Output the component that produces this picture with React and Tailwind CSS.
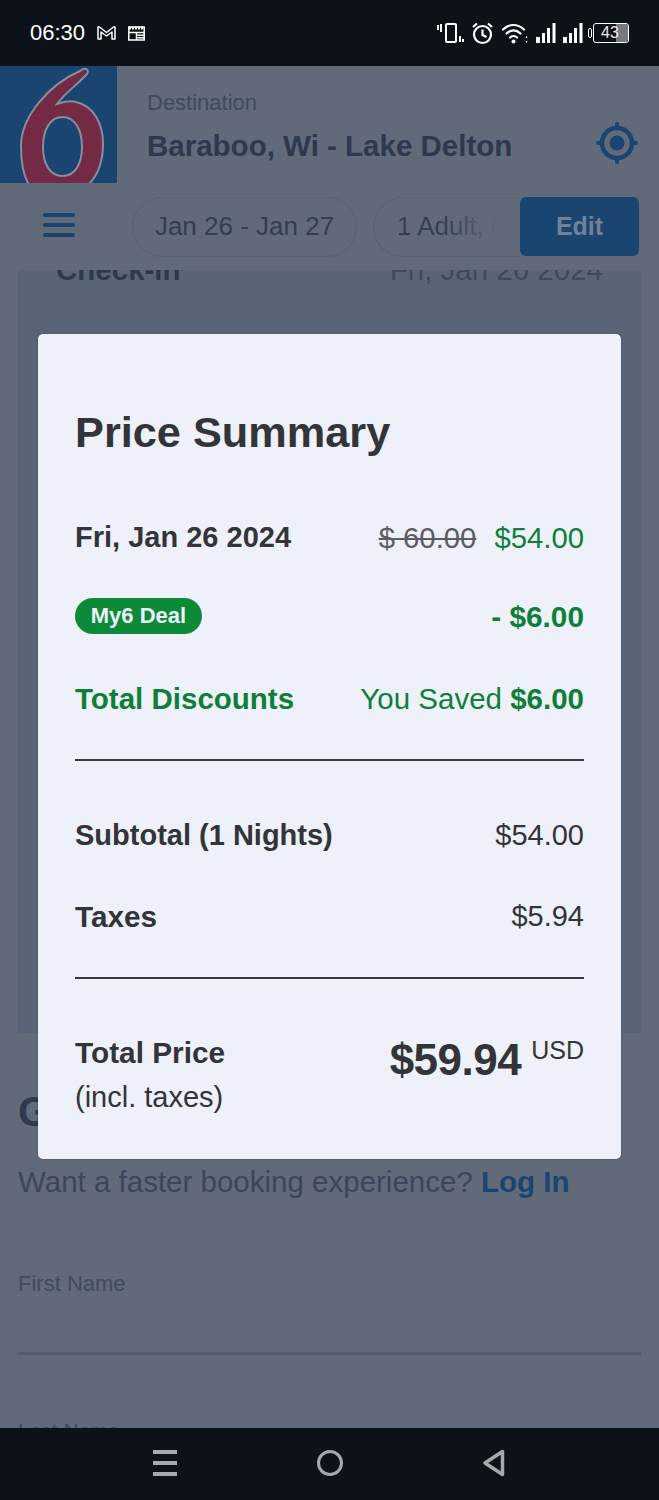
import React from "react";

function SignalBars({ className = "" }) {
  return (
    <svg className={className} width="20" height="20" viewBox="0 0 20 20" fill="white">
      <rect x="0" y="14" width="4" height="6" />
      <rect x="6" y="10" width="3" height="10" />
      <rect x="11" y="5" width="3" height="15" />
      <rect x="16.500" y="0" width="3" height="20" />
    </svg>
  );
}

function StatusIcons() {
  return (
    <div className="flex items-center text-white">
      <svg width="27" height="20" viewBox="0 0 27 20" fill="none" stroke="white">
        <path d="M1 2v5M4 1v8" strokeWidth="2" />
        <rect x="9" y="1" width="10" height="18" rx="1" strokeWidth="2" />
        <path d="M23 13v6M26 16v3" strokeWidth="2" />
      </svg>
      <svg className="ml-[7px]" width="23" height="23" viewBox="0 0 23 23" fill="none" stroke="white" strokeWidth="2.200">
        <circle cx="11.500" cy="12.500" r="8.500" />
        <path d="M11.500 7.500v5.500l4 2M2 5l4-3.500M21 5l-4-3.500" />
      </svg>
      <svg className="ml-[7px]" width="27" height="21" viewBox="0 0 27 21" fill="none" stroke="white" strokeWidth="2.200" strokeLinecap="round">
        <path d="M2 6.500c6.500-6 14.500-6 21 0M5.500 10.500c4.500-4 9.500-4 14 0M9 14.500c2-2 5-2 7 0" />
        <circle cx="12.500" cy="18.500" r="2" fill="white" stroke="none" />
        <path d="M25.500 14v.5M25.500 18.500v.5" strokeWidth="1.500" />
      </svg>
      <SignalBars className="ml-[8px]" />
      <SignalBars className="ml-[7px]" />
      <svg className="ml-[5px]" width="4" height="10" viewBox="0 0 4 10"><rect x="0.500" y="0.500" width="3" height="9" rx="1.500" fill="none" stroke="white" strokeWidth="1" /></svg>
      <div className="relative ml-[1px] flex h-[20px] w-[36px] items-center justify-center overflow-hidden rounded-[3px] border border-white text-[16px] leading-none text-[#e8e8e8]">
        <div className="absolute inset-y-0 right-0 w-[36%] bg-[#77797c]" />
        <span className="relative -ml-[2px]">43</span>
      </div>
    </div>
  );
}

function Row({ className = "", children }) {
  return <div className={`flex items-center justify-between ${className}`}>{children}</div>;
}

export default function App() {
  return (
    <div className="relative flex h-[1500px] w-[659px] flex-col overflow-hidden bg-[#606a79] font-['Liberation_Sans',Arial,sans-serif]">
      {/* status bar */}
      <div className="flex h-[66px] shrink-0 items-center justify-between bg-[#0c1218] pl-[30px] pr-[30px]">
        <div className="flex items-center gap-[12px] text-white">
          <span className="text-[22px] leading-none">06:30</span>
          <svg width="19" height="14" viewBox="0 0 19 14" fill="none" stroke="white" strokeWidth="1.500">
            <path d="M1 13V1h1.500L9.500 6.500 16.500 1H18v12h-3V6L9.500 10 4 6v7z" strokeLinejoin="round" />
          </svg>
          <svg width="17" height="15" viewBox="0 0 17 15" fill="none" stroke="white" strokeWidth="1.500">
            <rect x="0.800" y="1" width="15.400" height="13" />
            <path d="M1 2h15" strokeWidth="3" strokeDasharray="2 1" />
            <path d="M1 6.500h15M8.500 6.500v7.500M9.500 9.200h7M9.500 11.700h7" />
          </svg>
        </div>
        <StatusIcons />
      </div>

      {/* header */}
      <div className="flex h-[117px] shrink-0">
        <div className="h-[117px] w-[117px] shrink-0 overflow-hidden bg-[#1a4570]">
          <svg width="117" height="117" viewBox="0 0 117 117">
            <path
              fillRule="evenodd"
              d="M80 5C84 1 90 3 87 8C78 18 65 27 57 38C65 35 72 35 76 36C94 40 103 58 103 78C103 95 98 108 90 117C85 123 75 128 60 128C45 128 35 123 28 117C23 108 21 95 21 80C21 50 50 18 80 5ZM62.500 51C50 51 43 64 43 81C43 98 50 110 62.500 110C75 110 82 98 82 81C82 64 75 51 62.500 51Z"
              fill="#742a45"
              stroke="#878d9b"
              strokeWidth="2"
            />
          </svg>
        </div>
        <div className="flex min-w-0 flex-1 items-start justify-between pl-[30px] pr-[21px] pt-[25px]">
          <div>
            <div className="text-[22px] leading-[24px] text-[#3f4a5c]">Destination</div>
            <div className="mt-[14px] text-[29.500px] font-bold leading-[34px] text-[#2c394e]">Baraboo, Wi - Lake Delton</div>
          </div>
          <svg className="mt-[31px]" width="42" height="42" viewBox="0 0 42 42" fill="none">
            <circle cx="21" cy="21" r="15" stroke="#1a4570" strokeWidth="4.500" />
            <circle cx="21" cy="21" r="7.500" fill="#1a4570" />
            <path d="M21 2v4M21 36v4M2 21h4M36 21h4" stroke="#1a4570" strokeWidth="4" strokeLinecap="round" />
          </svg>
        </div>
      </div>

      {/* pills row */}
      <div className="relative flex h-[87px] shrink-0 items-start pl-[43px] pt-[14px]">
        <div className="mt-[16px] flex h-[24px] w-[32px] flex-col justify-between">
          <div className="h-[4px] rounded-full bg-[#1a4570]" />
          <div className="h-[4px] rounded-full bg-[#1a4570]" />
          <div className="h-[4px] rounded-full bg-[#1a4570]" />
        </div>
        <div className="ml-[57px] flex h-[60px] w-[225px] shrink-0 items-center justify-center rounded-full border border-[#586272] pb-[2px] text-[26px] text-[#333e50]">Jan 26 - Jan 27</div>
        <div className="ml-[16px] flex h-[60px] w-[147px] shrink-0 items-center overflow-hidden rounded-l-full border border-r-0 border-[#586272] pb-[2px] pl-[23px] text-[26px] whitespace-nowrap">
          <span className="bg-gradient-to-r from-[#333e50] from-40% to-[#606a79] to-95% bg-clip-text text-transparent">1 Adult, 0</span>
        </div>
        <div className="absolute left-[520px] top-[14px] flex h-[59px] w-[119px] items-center justify-center rounded-[6px] bg-[#1a4570] text-[25px] font-bold text-[#71819a]">Edit</div>
      </div>

      {/* underlying page */}
      <div className="min-h-0 flex-1 overflow-hidden px-[18px]">
        <div className="h-[763px] overflow-hidden bg-[#596577] px-[38px]">
          <div className="-mt-[15px] flex items-center justify-between text-[29.500px] leading-[30px]">
            <span className="font-bold text-[#2c394e]">Check-in</span>
            <span className="text-[#3f4a5c]">Fri, Jan 26 2024</span>
          </div>
        </div>
        <div className="mt-[56px] text-[42px] font-bold leading-[46px] text-[#2c394e]">Guest</div>
        <div className="mt-[29px] text-[29.500px] leading-[36px] text-[#3a4659]">
          Want a faster booking experience? <span className="font-bold text-[#1a4570]">Log In</span>
        </div>
        <div className="mt-[72px] text-[22px] leading-[24px] text-[#414c5e]">First Name</div>
        <div className="mt-[56px] h-[3px] bg-[#525c6b]" />
        <div className="mt-[64px] text-[21px] leading-[24px] text-[#414c5e]">Last Name</div>
      </div>

      {/* nav bar */}
      <div className="relative z-10 flex h-[72px] shrink-0 items-center bg-[#0c1218] pb-[2px]">
        <div className="ml-[153px] flex h-[26px] w-[24px] flex-col justify-between">
          <div className="h-[4px] bg-[#a7a9ad]" />
          <div className="h-[4px] bg-[#a7a9ad]" />
          <div className="h-[4px] bg-[#a7a9ad]" />
        </div>
        <div className="ml-[140px] h-[26px] w-[26px] rounded-full border-[3.500px] border-[#a7a9ad]" />
        <svg className="ml-[138px]" width="26" height="30" viewBox="0 0 26 30" fill="none">
          <path d="M21.500 3.500V26.500L4 15Z" stroke="#a7a9ad" strokeWidth="3.500" strokeLinejoin="round" />
        </svg>
      </div>

      {/* modal */}
      <div className="absolute left-[38px] top-[334px] h-[825px] w-[583px] rounded-[5px] bg-[#eef1fa] px-[37px] text-[#333438] shadow-[0_0_2px_rgba(0,0,0,0.3)]">
        <h2 className="mt-[71px] text-[43.300px] font-bold leading-[54px]">Price Summary</h2>

        <Row className="mt-[61px] h-[36px] text-[29px]">
          <span className="font-bold">Fri, Jan 26 2024</span>
          <span className="flex items-center gap-[18px] text-[29.300px]">
            <span className="text-[#5c5d62] line-through">$ 60.00</span>
            <span className="text-[#0f7f38]">$54.00</span>
          </span>
        </Row>

        <Row className="mt-[43px] h-[37px] text-[29.800px]">
          <span className="mb-[4px] flex h-[36px] w-[127px] items-center justify-center rounded-full bg-[#0c8a38] text-[22px] font-bold text-[#eef1fa]">My6 Deal</span>
          <span className="font-bold text-[#0f7f38]">- $6.00</span>
        </Row>

        <Row className="mt-[45px] h-[36px] text-[29.500px] text-[#0f7f38]">
          <span className="font-bold">Total Discounts</span>
          <span>You Saved <span className="font-bold">$6.00</span></span>
        </Row>

        <div className="mt-[42px] h-[2px] bg-[#38393e]" />

        <Row className="mt-[57px] h-[36px] text-[29px]">
          <span className="font-bold">Subtotal (1 Nights)</span>
          <span>$54.00</span>
        </Row>

        <Row className="mt-[45px] h-[36px] text-[29px]">
          <span className="text-[29.700px] font-bold">Taxes</span>
          <span>$5.94</span>
        </Row>

        <div className="mt-[42px] h-[2px] bg-[#38393e]" />

        <div className="mt-[56px] flex items-start justify-between text-[29px]">
          <div>
            <div className="text-[29.800px] font-bold leading-[36px]">Total Price</div>
            <div className="mt-[8px] leading-[36px]">(incl. taxes)</div>
          </div>
          <div className="flex items-start">
            <span className="text-[44px] font-bold leading-[50px] tracking-[-0.5px]">$59.94</span>
            <span className="ml-[10px] text-[25px] leading-[30px]">USD</span>
          </div>
        </div>
      </div>
    </div>
  );
}
